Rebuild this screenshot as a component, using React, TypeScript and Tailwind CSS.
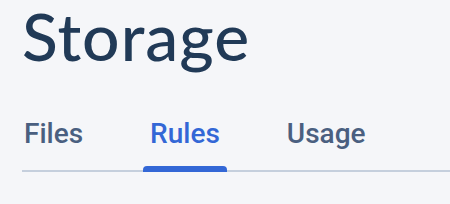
import React from "react";

export default function App() {
  const tabs = [
    { label: "Files", active: false },
    { label: "Rules", active: true },
    { label: "Usage", active: false },
  ];
  return (
    <div className="w-[450px] h-[204px] bg-[#f5f6f9] overflow-hidden">
      <div className="pl-[22px]">
        <h1
          className="text-[66px] leading-[72px] font-medium text-[#213a57] tracking-[1px]"
          style={{ fontFamily: "Lato, sans-serif" }}
        >
          Storage
        </h1>
        <div className="mt-[46px] relative border-b-[2px] border-[#c5cfdd]">
          <div className="flex gap-[53px] ml-[-5px]">
            {tabs.map((t) => (
              <div
                key={t.label}
                className={
                  "relative px-[7px] pb-[20px] text-[28px] leading-[32px] font-medium " +
                  (t.active ? "text-[#3367d6]" : "text-[#4a5f80]")
                }
                style={{ fontFamily: "Roboto, sans-serif" }}
              >
                {t.label}
                {t.active && (
                  <div className="absolute left-0 right-0 bottom-[-2px] h-[6px] rounded-t-[4px] bg-[#3367d6]" />
                )}
              </div>
            ))}
          </div>
        </div>
      </div>
    </div>
  );
}
